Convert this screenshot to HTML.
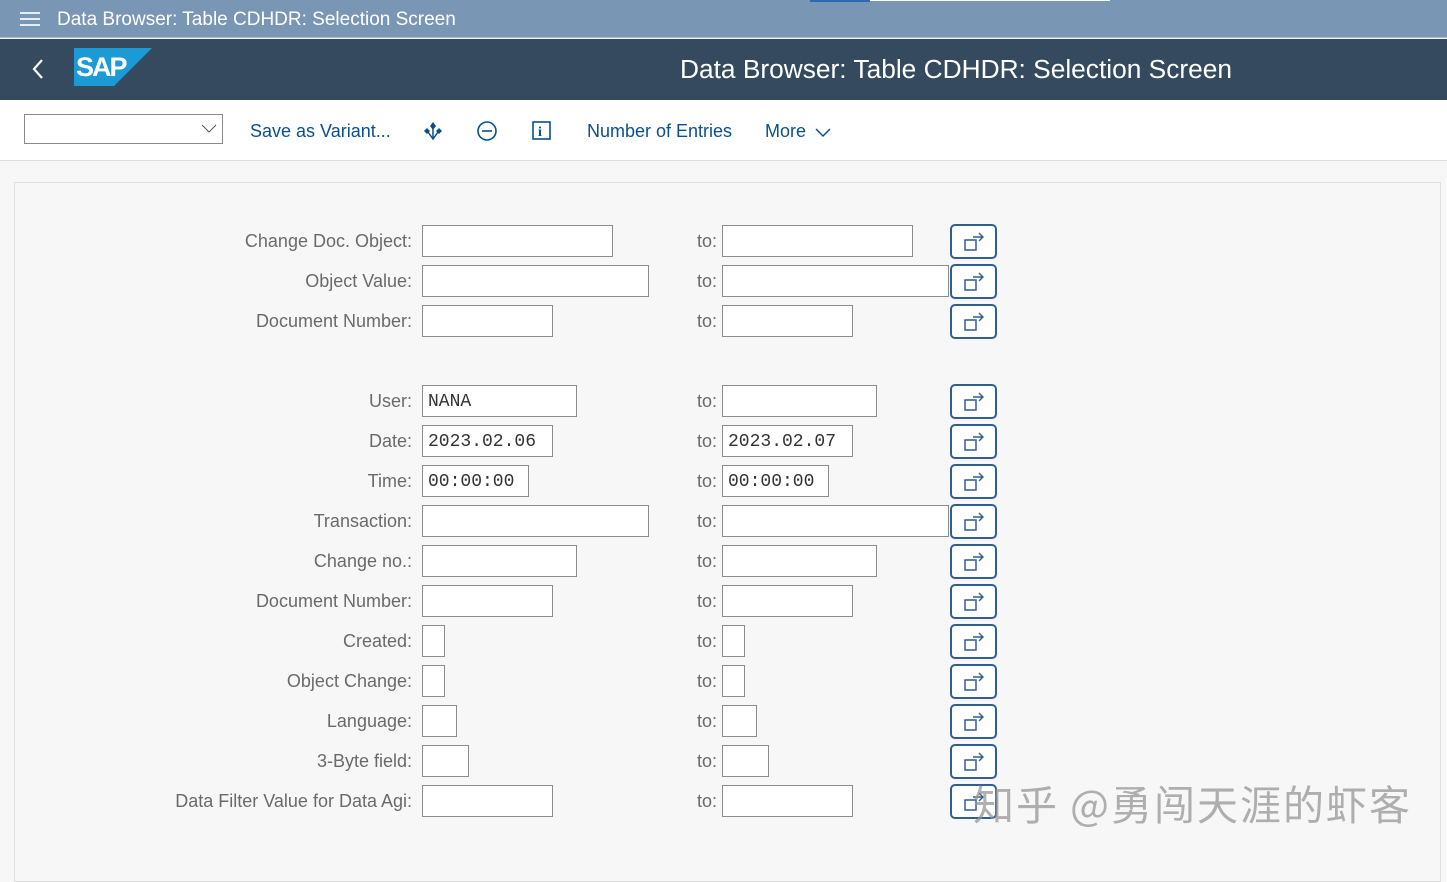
<!DOCTYPE html>
<html><head><meta charset="utf-8"><style>
*{box-sizing:border-box;margin:0;padding:0}
body{width:1447px;height:856px;overflow:hidden;background:#f7f7f7;font-family:"Liberation Sans","Noto Sans CJK SC",sans-serif;position:relative}
.top{position:absolute;left:0;top:0;width:1447px;height:38px;background:#7a96b5;border-bottom:1px solid #a8bad0}
.top .t{position:absolute;left:57px;top:9px;color:#fff;font-size:19px}
.hb{position:absolute;left:20px;top:12px;width:20px;height:15px}
.hb i{display:block;height:2px;background:#e8eef5;margin-bottom:4px}
.hdr{position:absolute;left:0;top:39px;width:1447px;height:61px;background:#354a5f}
.hdr .t{position:absolute;left:680px;top:15px;color:#fff;font-size:26.3px}
.tb{position:absolute;left:0;top:100px;width:1447px;height:61px;background:#fff;border-bottom:1px solid #ddd}
.tb .lnk{position:absolute;top:21px;color:#0a4f8c;font-size:18px}
.sel{position:absolute;left:24px;top:14px;width:199px;height:30px;border:1px solid #8a8a8a;background:#fff}
.panel{position:absolute;left:14px;top:182px;width:1427px;height:700px;border:1px solid #e0e0e0;background:#f7f7f7}
.lab{position:absolute;right:1035px;font-size:18px;color:#6a6a6a;white-space:nowrap}
.to{position:absolute;left:697px;font-size:18px;color:#6a6a6a}
.in{position:absolute;height:32px;border:1px solid #8c8c8c;background:#fff;font-family:"Liberation Mono",monospace;font-size:18px;color:#333;padding:6px 0 0 5px}
.btn{position:absolute;left:950px;width:47px;height:35px;border:2px solid #2f5f8f;border-radius:5px;background:#fff}
.wm{position:absolute;left:973px;top:772px;font-size:41px;color:rgba(150,150,150,.75);font-family:"Noto Sans CJK SC",sans-serif;letter-spacing:2px}
</style></head><body>
<div class="top"><div class="hb"><i></i><i></i><i></i></div><div class="t">Data Browser: Table CDHDR: Selection Screen</div>
<div style="position:absolute;left:810px;top:0;width:60px;height:2px;background:#2a6bb5"></div><div style="position:absolute;left:870px;top:0;width:240px;height:1px;background:#fff"></div></div>
<div class="hdr">
<svg style="position:absolute;left:30px;top:19px" width="16" height="22"><path d="M12 2 L4 11 L12 20" stroke="#fff" stroke-width="2.2" fill="none"/></svg>
<svg style="position:absolute;left:74px;top:9px" width="78" height="38"><polygon points="0,0 78,0 40,38 0,38" fill="#1b9ad6"/><text x="2" y="28" font-family="Liberation Sans" font-weight="bold" font-size="27" fill="#fff" letter-spacing="-2">SAP</text></svg>
<div class="t">Data Browser: Table CDHDR: Selection Screen</div></div>
<div class="tb">
<div class="sel"><svg style="position:absolute;left:176px;top:9px" width="16" height="10"><path d="M1 1 L8 8 L15 1" stroke="#555" fill="none"/></svg></div>
<div class="lnk" style="left:250px">Save as Variant...</div>
<svg style="position:absolute;left:422px;top:20px" width="22" height="22"><path d="M11 2 L14 6 L11 10 L8 6Z M5 8 L8 11 L5 14 L2 11Z M17 8 L20 11 L17 14 L14 11Z" fill="#0a4f8c"/><path d="M11 9 V19 M6 12 L11 19 L16 12" stroke="#0a4f8c" stroke-width="1.5" fill="none"/></svg>
<svg style="position:absolute;left:476px;top:20px" width="22" height="22"><circle cx="11" cy="11" r="9" stroke="#0a4f8c" stroke-width="1.6" fill="none"/><path d="M6 11H16" stroke="#0a4f8c" stroke-width="1.6"/></svg>
<svg style="position:absolute;left:532px;top:21px" width="20" height="20"><rect x="1" y="1" width="17" height="17" stroke="#0a4f8c" stroke-width="1.6" fill="none"/><text x="6" y="15" font-family="Liberation Serif" font-weight="bold" font-size="14" fill="#0a4f8c">i</text></svg>
<div class="lnk" style="left:587px">Number of Entries</div>
<div class="lnk" style="left:765px">More</div>
<svg style="position:absolute;left:815px;top:28px" width="16" height="10"><path d="M1 1 L8 8 L15 1" stroke="#0a4f8c" stroke-width="1.5" fill="none"/></svg>
</div>
<div class="panel"></div>
<div id="rows"></div>
<div class="wm">知乎 @勇闯天涯的虾客</div>
<script>
var R=[["Change Doc. Object:",241,190,190],["Object Value:",281,226,226],["Document Number:",321,130,130],["User:",401,154,154,"NANA",""],["Date:",441,130,130,"2023.02.06","2023.02.07"],["Time:",481,106,106,"00:00:00","00:00:00"],["Transaction:",521,226,226],["Change no.:",561,154,154],["Document Number:",601,130,130],["Created:",641,22,22],["Object Change:",681,22,22],["Language:",721,34,34],["3-Byte field:",761,46,46],["Data Filter Value for Data Agi:",801,130,130]];
var h="";R.forEach(function(r){var y=r[1];
h+='<div class="lab" style="top:'+(y-10)+'px">'+r[0]+'</div>';
h+='<div class="in" style="left:422px;top:'+(y-16)+'px;width:'+(r[2]+1)+'px">'+(r[4]||"")+'</div>';
h+='<div class="to" style="top:'+(y-10)+'px">to:</div>';
h+='<div class="in" style="left:722px;top:'+(y-16)+'px;width:'+(r[3]+1)+'px">'+(r[5]||"")+'</div>';
h+='<div class="btn" style="top:'+(y-17)+'px"><svg style="position:absolute;left:11px;top:5px" width="24" height="22"><rect x="2" y="9" width="11" height="10" stroke="#2f5f8f" stroke-width="1.5" fill="none"/><path d="M10 6H20 M16 2L20 6L16 10" stroke="#2f5f8f" stroke-width="1.4" fill="none"/></svg></div>';
});document.getElementById("rows").innerHTML=h;
</script>
</body></html>
